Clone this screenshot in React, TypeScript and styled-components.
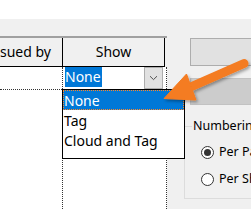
import React from "react";
import styled, { createGlobalStyle } from "styled-components";

const GlobalStyle = createGlobalStyle`
  html, body {
    margin: 0;
    padding: 0;
    background: #fff;
  }
  body {
    font-family: "Noto Sans", "Open Sans", sans-serif;
    color: #000;
  }
`;

const Screen = styled.div`
  position: relative;
  width: 251px;
  height: 209px;
  overflow: hidden;
  display: flex;
  flex-direction: column;
`;

const TopStrip = styled.div`
  flex: none;
  height: 19px;
  background: #fff;
`;

const Workspace = styled.div`
  flex: 1;
  display: flex;
  min-height: 0;
  background: #f0f0f0;
`;

// ---- grid (left) ----

const GridArea = styled.div`
  position: relative;
  z-index: 1;
  flex: none;
  width: 167px;
  padding-top: 17px;
  display: flex;
  flex-direction: column;
`;

const HeaderRow = styled.div`
  display: flex;
  height: 29px;
  border-top: 2px solid #a0a0a0;
  background: #f0f0f0;
`;

const HeaderCell = styled.div<{ $width: number; $align: "end" | "center" }>`
  box-sizing: border-box;
  width: ${({ $width }) => $width}px;
  flex: none;
  display: flex;
  align-items: center;
  justify-content: ${({ $align }) => ($align === "end" ? "flex-end" : "center")};
  padding-right: ${({ $align }) => ($align === "end" ? 11 : 0)}px;
  border-right: 1px solid #000;
  border-bottom: 1px solid #000;
  overflow: hidden;
  white-space: nowrap;
  font-size: 14px;
  line-height: 28px;
`;

const Body = styled.div`
  flex: 1;
  display: flex;
  background: #fff;
`;

const Column = styled.div<{ $width: number }>`
  width: ${({ $width }) => $width}px;
  flex: none;
  border-right: 1px dotted #333;
`;

const BlankCell = styled.div`
  height: 22px;
  border-bottom: 1px dotted #333;
`;

const ComboCell = styled.div`
  height: 22px;
  display: flex;
  align-items: flex-start;
  padding: 0 3px 0 2px;
`;

const ComboValue = styled.span`
  height: 20px;
  padding-right: 1px;
  background: #0078d7;
  color: #fff;
  font-size: 14px;
  line-height: 20px;
`;

const ComboButton = styled.div`
  margin-left: auto;
  width: 19px;
  height: 22px;
  box-sizing: border-box;
  background: #e1e1e1;
  border: 1px solid #adadad;
  display: flex;
  align-items: center;
  justify-content: center;
`;

const DropList = styled.div`
  position: absolute;
  left: 62px;
  top: 70px;
  width: 123px;
  height: 70px;
  box-sizing: border-box;
  background: #fff;
  border: 1px solid #000;
  z-index: 2;
`;

const DropItem = styled.div<{ $selected?: boolean }>`
  height: 20px;
  padding-left: 1px;
  font-size: 14px;
  line-height: 22px;
  white-space: nowrap;
  background: ${({ $selected }) => ($selected ? "#0078d7" : "transparent")};
  color: ${({ $selected }) => ($selected ? "#fff" : "#000")};
  outline: ${({ $selected }) => ($selected ? "1px dotted #ff8728" : "none")};
  outline-offset: -1px;
`;

// ---- right panel ----

const SidePanel = styled.div`
  flex: 1;
  min-width: 0;
  display: flex;
  flex-direction: column;
  align-items: flex-start;
  padding: 19px 0 0 17px;
  overflow: hidden;
`;

const PanelButton = styled.div<{ $pressed?: boolean }>`
  flex: none;
  margin-left: 6px;
  width: 90px;
  height: ${({ $pressed }) => ($pressed ? 27 : 28)}px;
  box-sizing: border-box;
  background: ${({ $pressed }) => ($pressed ? "#cccccc" : "#e1e1e1")};
  border: 1px solid ${({ $pressed }) => ($pressed ? "#c2c2c2" : "#adadad")};
  & + & {
    margin-top: 12px;
  }
`;

const GroupBox = styled.fieldset`
  flex: none;
  margin: 13px 0 0 0;
  padding: 0 0 11px 16px;
  width: 130px;
  border: 1px solid #dcdcdc;
  font-size: 12.5px;
`;

const GroupLegend = styled.legend`
  margin-left: -9px;
  padding: 0 1px;
  line-height: 16px;
  white-space: nowrap;
`;

const RadioList = styled.div`
  display: flex;
  flex-direction: column;
  gap: 11px;
  margin-top: 10px;
`;

const RadioRow = styled.label`
  display: flex;
  align-items: center;
  gap: 5px;
  height: 16px;
  white-space: nowrap;
  line-height: 16px;
`;

const RadioDot = styled.span<{ $checked?: boolean }>`
  flex: none;
  width: 13px;
  height: 13px;
  box-sizing: border-box;
  border-radius: 50%;
  border: 1px solid #333;
  background: #fff;
  display: flex;
  align-items: center;
  justify-content: center;
  &::after {
    content: "";
    width: 7px;
    height: 7px;
    border-radius: 50%;
    background: ${({ $checked }) => ($checked ? "#333" : "transparent")};
  }
`;

const Callout = styled.svg`
  position: absolute;
  left: 0;
  top: 0;
  z-index: 3;
  pointer-events: none;
`;

const Chevron = () => (
  <svg width="9" height="6" viewBox="0 0 9 6">
    <path d="M1 1.2 L4.5 4.6 L8 1.2" fill="none" stroke="#505050" strokeWidth="1" />
  </svg>
);

const options = ["None", "Tag", "Cloud and Tag"];

const App: React.FC = () => {
  return (
    <>
      <GlobalStyle />
      <Screen>
        <TopStrip />
        <Workspace>
          <GridArea>
            <HeaderRow>
              <HeaderCell $width={63} $align="end">
                Issued by
              </HeaderCell>
              <HeaderCell $width={102} $align="center">
                Show
              </HeaderCell>
            </HeaderRow>
            <Body>
              <Column $width={62}>
                <BlankCell />
              </Column>
              <Column $width={103}>
                <ComboCell>
                  <ComboValue>None</ComboValue>
                  <ComboButton>
                    <Chevron />
                  </ComboButton>
                </ComboCell>
              </Column>
            </Body>
            <DropList>
              {options.map((o, i) => (
                <DropItem key={o} $selected={i === 0}>
                  {o}
                </DropItem>
              ))}
            </DropList>
          </GridArea>

          <SidePanel>
            <PanelButton />
            <PanelButton $pressed />
            <GroupBox>
              <GroupLegend>Numbering</GroupLegend>
              <RadioList>
                <RadioRow>
                  <RadioDot $checked />
                  Per Page
                </RadioRow>
                <RadioRow>
                  <RadioDot />
                  Per Sheet
                </RadioRow>
              </RadioList>
            </GroupBox>
          </SidePanel>
        </Workspace>

        <Callout width="251" height="209" viewBox="0 0 251 209">
          <defs>
            <filter id="arrowShadow" x="-20%" y="-20%" width="140%" height="140%">
              <feDropShadow dx="1.5" dy="2" stdDeviation="1.5" floodColor="#000" floodOpacity="0.35" />
            </filter>
          </defs>
          <g filter="url(#arrowShadow)" fill="#f47b20" stroke="#f47b20">
            <line x1="244" y1="63.5" x2="186" y2="89" strokeWidth="9" strokeLinecap="round" />
            <polygon points="164,98.5 186.5,74 196,100" strokeWidth="1" strokeLinejoin="round" />
          </g>
        </Callout>
      </Screen>
    </>
  );
};

export default App;
